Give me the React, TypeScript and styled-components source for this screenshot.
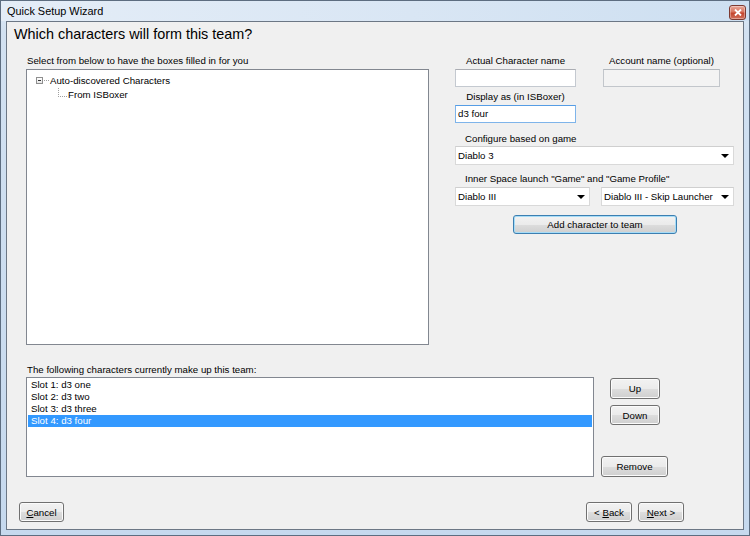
import React from "react";
import styled, { createGlobalStyle } from "styled-components";

const Global = createGlobalStyle`
  html, body { margin: 0; padding: 0; }
  body {
    width: 750px; height: 536px; overflow: hidden;
    font-family: "Liberation Sans", Arial, sans-serif;
    font-size: 9.7px; color: #000;
  }
  #root { width: 750px; height: 536px; }
`;

const Window = styled.div`
  width: 750px; height: 536px; box-sizing: border-box;
  display: flex; flex-direction: column;
  border: 1px solid #5d6d80;
  background: linear-gradient(to bottom, #dfeaf6 0px, #d2e1f1 30px, #c6d9ee 100%);
`;

const TitleBar = styled.div`
  height: 20px; flex: none;
  display: flex; justify-content: space-between; align-items: flex-start;
  padding: 0 3px 0 6px;
  background: linear-gradient(to right, #e4edf7 0%, #d9e6f4 55%, #cddff1 100%);
`;

const TitleText = styled.div`
  font-size: 10.9px; line-height: 20px; color: #000;
`;

const CloseButton = styled.div`
  width: 17px; height: 15px; box-sizing: border-box; margin-top: 4px;
  border: 1px solid #7d3a31; border-radius: 3px;
  background: linear-gradient(to bottom, #e9a89a 0%, #d8755f 45%, #c4442c 55%, #d0705c 100%);
  box-shadow: inset 0 0 0 1px rgba(255,255,255,0.35);
  display: flex; align-items: center; justify-content: center;
`;

const FrameBody = styled.div`
  flex: 1; display: flex; padding: 0 5px 5px 5px; min-height: 0;
`;

const Client = styled.div`
  flex: 1; display: flex; flex-direction: column;
  border: 1px solid #6c7785; background: #f0f0f0;
`;

const Heading = styled.div`
  font-size: 14.4px; line-height: 18px; margin: 3px 0 0 7px;
`;

const TopSection = styled.div`
  display: flex; align-items: flex-start; margin-top: 11px;
`;

const LeftCol = styled.div`
  width: 403px; margin-left: 19px; display: flex; flex-direction: column;
`;

const Label = styled.div<{ $pl?: number; $mt?: number; $center?: boolean }>`
  line-height: 13px; height: 13px; white-space: nowrap;
  padding-left: ${(p) => p.$pl ?? 0}px;
  margin-top: ${(p) => p.$mt ?? 0}px;
  text-align: ${(p) => (p.$center ? "center" : "left")};
`;

const TreeBox = styled.div`
  height: 276px; box-sizing: border-box; margin-top: 2px;
  border: 1px solid #828790; background: #fff;
  padding-top: 3px;
`;

const TreeRow = styled.div<{ $indent: number }>`
  height: 14px; display: flex; align-items: center;
  padding-left: ${(p) => p.$indent}px;
`;

const Expander = styled.div`
  width: 7px; height: 7px; box-sizing: border-box; flex: none;
  border: 1px solid #8f8f8f; background: linear-gradient(#ffffff, #e6e6e6);
  display: flex; align-items: center; justify-content: center;
  &::after { content: ""; width: 3px; height: 1px; background: #333; }
`;

const HDots = styled.div<{ $w: number }>`
  width: ${(p) => p.$w}px; height: 0; flex: none; margin: 0 1px;
  border-top: 1px dotted #a0a0a0;
`;

const ChildConnector = styled.div`
  width: 8px; height: 8px; flex: none; align-self: flex-start; margin-top: 1px;
  border-left: 1px dotted #a0a0a0; border-bottom: 1px dotted #a0a0a0;
  margin-right: 1px;
`;

const RightCol = styled.div`
  width: 279px; margin-left: 26px; display: flex; flex-direction: column;
`;

const FieldRow = styled.div`
  display: flex; gap: 27px;
`;

const Field = styled.div<{ $w: number; $mt?: number }>`
  width: ${(p) => p.$w}px; display: flex; flex-direction: column;
  margin-top: ${(p) => p.$mt ?? 0}px;
`;

const TextBox = styled.div<{ $disabled?: boolean; $focus?: boolean }>`
  height: 18px; box-sizing: border-box; margin-top: 2px;
  padding: 0 2px; line-height: 16px;
  border: 1px solid ${(p) => (p.$focus ? "#7eb4ea" : p.$disabled ? "#c2c6cb" : "#c4c9d0")};
  border-top-color: ${(p) => (p.$focus ? "#569de5" : p.$disabled ? "#b3b8bd" : "#abadb3")};
  background: ${(p) => (p.$disabled ? "#f3f3f3" : "#fff")};
`;

const Combo = styled.div<{ $w: number; $mt?: number }>`
  width: ${(p) => p.$w}px; height: 19px; box-sizing: border-box;
  margin-top: ${(p) => p.$mt ?? 0}px;
  display: flex; align-items: center; justify-content: space-between;
  padding: 0 4px 0 2px;
  border: 1px solid #d9d9d9; border-top-color: #cfcfcf;
  background: #fff;
`;

const Arrow = styled.div`
  width: 0; height: 0;
  border-left: 4px solid transparent; border-right: 4px solid transparent;
  border-top: 4px solid #000;
`;

const ComboRow = styled.div`
  display: flex; justify-content: space-between; margin-top: 2px;
`;

const Button = styled.div<{ $w: number; $h?: number; $default?: boolean; $mt?: string; $ml?: number }>`
  width: ${(p) => p.$w}px; height: ${(p) => p.$h ?? 20}px; box-sizing: border-box; flex: none;
  margin-top: ${(p) => p.$mt ?? "0"}; margin-left: ${(p) => p.$ml ?? 0}px;
  border: 1px solid ${(p) => (p.$default ? "#3c7fb1" : "#707070")};
  border-radius: 3px;
  background: linear-gradient(to bottom, #f2f2f2 0%, #ebebeb 50%, #dddddd 51%, #cfcfcf 100%);
  box-shadow: inset 0 0 0 1px ${(p) => (p.$default ? "#a6dcf7" : "#fbfbfb")};
  display: flex; align-items: center; justify-content: center;
  line-height: 13px; white-space: pre;
`;

const BottomLabel = styled(Label)`
  margin-left: 20px; margin-top: 18px;
`;

const BottomRow = styled.div`
  display: flex; margin-left: 19px; margin-top: 1px; gap: 7px;
`;

const ListBox = styled.div`
  width: 568px; height: 100px; box-sizing: border-box;
  border: 1px solid #828790; background: #fff; padding: 1px;
`;

const ListItem = styled.div<{ $selected?: boolean }>`
  height: 12px; line-height: 12px; padding-left: 3px; white-space: nowrap;
  background: ${(p) => (p.$selected ? "#3399ff" : "transparent")};
  color: ${(p) => (p.$selected ? "#fff" : "#000")};
`;

const SideButtons = styled.div`
  width: 67px; display: flex; flex-direction: column;
`;

const Footer = styled.div`
  display: flex; align-items: center; margin-top: 25px; padding: 0 0 0 12px;
`;

const FooterRight = styled.div`
  display: flex; gap: 6px; margin-left: auto; margin-right: 59px;
`;

const items = ["Slot 1: d3 one", "Slot 2: d3 two", "Slot 3: d3 three", "Slot 4: d3 four"];

export default function App() {
  return (
    <>
      <Global />
      <Window>
        <TitleBar>
          <TitleText>Quick Setup Wizard</TitleText>
          <CloseButton>
            <svg width="8" height="7" viewBox="0 0 8 7">
              <path d="M1 0.5 L7 6.5 M7 0.5 L1 6.5" stroke="#fff" strokeWidth="1.8" />
            </svg>
          </CloseButton>
        </TitleBar>
        <FrameBody>
          <Client>
            <Heading>Which characters will form this team?</Heading>
            <TopSection>
              <LeftCol>
                <Label $pl={1}>Select from below to have the boxes filled in for you</Label>
                <TreeBox>
                  <TreeRow $indent={9}>
                    <Expander />
                    <HDots $w={5} />
                    <span>Auto-discovered Characters</span>
                  </TreeRow>
                  <TreeRow $indent={31}>
                    <ChildConnector />
                    <span>From ISBoxer</span>
                  </TreeRow>
                </TreeBox>
              </LeftCol>
              <RightCol>
                <FieldRow>
                  <Field $w={121}>
                    <Label $center>Actual Character name</Label>
                    <TextBox />
                  </Field>
                  <Field $w={117}>
                    <Label $center>Account name (optional)</Label>
                    <TextBox $disabled />
                  </Field>
                </FieldRow>
                <Field $w={121} $mt={3}>
                  <Label $center>Display as (in ISBoxer)</Label>
                  <TextBox $focus>d3 four</TextBox>
                </Field>
                <Label $pl={10} $mt={9}>Configure based on game</Label>
                <Combo $w={279} $mt={1}>
                  <span>Diablo 3</span>
                  <Arrow />
                </Combo>
                <Label $pl={10} $mt={7}>Inner Space launch "Game" and "Game Profile"</Label>
                <ComboRow>
                  <Combo $w={135}>
                    <span>Diablo III</span>
                    <Arrow />
                  </Combo>
                  <Combo $w={133}>
                    <span>Diablo III - Skip Launcher</span>
                    <Arrow />
                  </Combo>
                </ComboRow>
                <Button $w={164} $h={19} $default $mt="9px" $ml={58}>Add character to team</Button>
              </RightCol>
            </TopSection>
            <BottomLabel>The following characters currently make up this team:</BottomLabel>
            <BottomRow>
              <ListBox>
                {items.map((t, i) => (
                  <ListItem key={t} $selected={i === 3}>{t}</ListItem>
                ))}
              </ListBox>
              <SideButtons>
                <Button $w={50} $h={21} $mt="1px" $ml={9}>Up</Button>
                <Button $w={50} $h={20} $mt="6px" $ml={9}>Down</Button>
                <Button $w={67} $h={21} $mt="auto">Remove</Button>
              </SideButtons>
            </BottomRow>
            <Footer>
              <Button $w={45}><span><u>C</u>ancel</span></Button>
              <FooterRight>
                <Button $w={46}><span>&lt; <u>B</u>ack</span></Button>
                <Button $w={46}><span><u>N</u>ext &gt;</span></Button>
              </FooterRight>
            </Footer>
          </Client>
        </FrameBody>
      </Window>
    </>
  );
}
